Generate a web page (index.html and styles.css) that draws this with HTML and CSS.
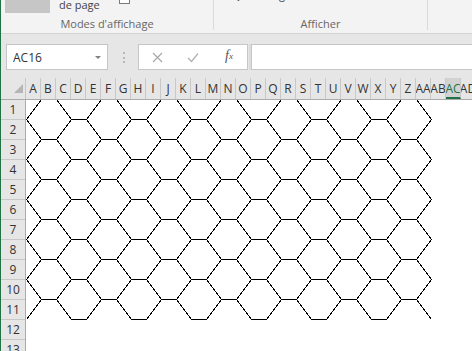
FILE: index.html
```html
<!DOCTYPE html>
<html lang="fr">
<head>
    <meta charset="UTF-8">
    <meta name="viewport" content="width=device-width, initial-scale=1.0">
    <title>Classeur - nid d'abeille</title>
    <link rel="stylesheet" href="styles.css">
</head>
<body>
    <div class="app">
        <div class="ribbon">
            <div class="group">
                <div class="group-body">
                    <div class="icon-box"></div>
                    <span class="btn-text">de page</span>
                    <span class="checkbox"></span>
                </div>
                <div class="group-label">Modes d'affichage</div>
            </div>
            <div class="group">
                <div class="group-body">
                    <span class="cut-text">Quadrillage</span>
                </div>
                <div class="group-label">Afficher</div>
            </div>
            <div class="group group-last"></div>
        </div>

        <div class="formula-bar">
            <div class="name-box">
                <span>AC16</span>
                <span class="arrow"></span>
            </div>
            <div class="grip"></div>
            <div class="fx-box">
                <span class="fx-btn">
                    <svg width="11" height="11" viewBox="0 0 11 11"><path d="M1 1L10 10M10 1L1 10" stroke="#a8a8a8" stroke-width="1.2" fill="none"/></svg>
                </span>
                <span class="fx-btn">
                    <svg width="12" height="11" viewBox="0 0 12 11"><path d="M1 6L4.5 9.5L11 1.5" stroke="#b0b0b0" stroke-width="1.2" fill="none"/></svg>
                </span>
                <span class="fx-btn fx-label">f<sub>x</sub></span>
            </div>
            <div class="formula-input"></div>
        </div>

        <div class="sheet">
            <div class="col-headers">
                <div class="corner"><span class="corner-tri"></span></div>
                <div class="col">A</div>
                <div class="col">B</div>
                <div class="col">C</div>
                <div class="col">D</div>
                <div class="col">E</div>
                <div class="col">F</div>
                <div class="col">G</div>
                <div class="col">H</div>
                <div class="col">I</div>
                <div class="col">J</div>
                <div class="col">K</div>
                <div class="col">L</div>
                <div class="col">M</div>
                <div class="col">N</div>
                <div class="col">O</div>
                <div class="col">P</div>
                <div class="col">Q</div>
                <div class="col">R</div>
                <div class="col">S</div>
                <div class="col">T</div>
                <div class="col">U</div>
                <div class="col">V</div>
                <div class="col">W</div>
                <div class="col">X</div>
                <div class="col">Y</div>
                <div class="col">Z</div>
                <div class="col">AA</div>
                <div class="col">AB</div>
                <div class="col col-active">AC</div>
                <div class="col">AD</div>
            </div>

            <div class="sheet-body">
                <div class="row-headers">
                    <div class="row-num">1</div>
                    <div class="row-num">2</div>
                    <div class="row-num">3</div>
                    <div class="row-num">4</div>
                    <div class="row-num">5</div>
                    <div class="row-num">6</div>
                    <div class="row-num">7</div>
                    <div class="row-num">8</div>
                    <div class="row-num">9</div>
                    <div class="row-num">10</div>
                    <div class="row-num">11</div>
                    <div class="row-num">12</div>
                    <div class="row-num">13</div>
                </div>
                <div class="cells">
                    <!-- hexagon drawing: one zigzag per row, 15px per column, 20px per row -->
                    <svg class="hexes" width="406" height="220" shape-rendering="crispEdges">
                        <defs>
                            <polyline id="zig-even" points="0,20 15,0 30,0 45,20 60,20 75,0 90,0 105,20 120,20 135,0 150,0 165,20 180,20 195,0 210,0 225,20 240,20 255,0 270,0 285,20 300,20 315,0 330,0 345,20 360,20 375,0 390,0 405,20"/>
                            <polyline id="zig-odd" points="0,0 15,20 30,20 45,0 60,0 75,20 90,20 105,0 120,0 135,20 150,20 165,0 180,0 195,20 210,20 225,0 240,0 255,20 270,20 285,0 300,0 315,20 330,20 345,0 360,0 375,20 390,20 405,0"/>
                        </defs>
                        <g transform="translate(0.5,-0.5)" stroke="#000" stroke-width="1" fill="none">
                            <use href="#zig-even" y="0"/>
                            <use href="#zig-odd" y="20"/>
                            <use href="#zig-even" y="40"/>
                            <use href="#zig-odd" y="60"/>
                            <use href="#zig-even" y="80"/>
                            <use href="#zig-odd" y="100"/>
                            <use href="#zig-even" y="120"/>
                            <use href="#zig-odd" y="140"/>
                            <use href="#zig-even" y="160"/>
                            <use href="#zig-odd" y="180"/>
                            <use href="#zig-even" y="200"/>
                        </g>
                    </svg>
                </div>
            </div>
        </div>
    </div>
</body>
</html>
```

FILE: styles.css
```css
html, body {
    margin: 0;
    padding: 0;
    width: 472px;
    height: 351px;
    overflow: hidden;
}
body {
    font-family: "Open Sans", "Noto Sans", sans-serif;
    background-color: #fff;
}
.app {
    display: flex;
    flex-direction: column;
    height: 351px;
    border-left: 1px solid #217346;
}

/* ribbon */
.ribbon {
    display: flex;
    height: 30px;
    padding-bottom: 3px;
    background-color: #f3f3f3;
    border-bottom: 1px solid #d5d5d5;
}
.group {
    width: 214px;
    flex-shrink: 0;
    box-sizing: border-box;
    border-right: 1px solid #dadada;
    display: flex;
    flex-direction: column;
}
.group:first-child {
    width: 213px;
}
.group-last {
    flex: 1;
    border-right: none;
}
.group-body {
    height: 18px;
    display: flex;
    align-items: flex-start;
}
.icon-box {
    width: 45px;
    height: 13px;
    margin-left: 4px;
    background-color: #c6c6c6;
}
.btn-text {
    margin-left: 9px;
    margin-top: -3px;
    font-size: 11px;
    line-height: 15px;
    color: #444;
}
.checkbox {
    width: 9px;
    height: 9px;
    margin-left: 19px;
    margin-top: -7px;
    border: 1px solid #7a7a7a;
    background-color: #fff;
}
.cut-text {
    margin-left: 18px;
    margin-top: -13px;
    font-size: 11px;
    line-height: 15px;
    color: #444;
}
.group-label {
    height: 12px;
    font-size: 11px;
    line-height: 12px;
    color: #666;
    text-align: center;
    white-space: nowrap;
}

/* formula bar */
.formula-bar {
    display: flex;
    align-items: center;
    height: 26px;
    padding: 10px 0 8px 5px;
    background-color: #e6e6e6;
}
.name-box {
    width: 102px;
    height: 26px;
    box-sizing: border-box;
    display: flex;
    align-items: center;
    padding-left: 6px;
    background-color: #fff;
    border: 1px solid #c6c6c6;
    font-size: 12px;
    color: #333;
}
.arrow {
    margin-left: auto;
    margin-right: 6px;
    width: 0;
    height: 0;
    border-left: 3px solid transparent;
    border-right: 3px solid transparent;
    border-top: 3px solid #808080;
}
.grip {
    width: 0;
    height: 11px;
    margin-left: 15px;
    border-left: 2px dotted #b8b8b8;
}
.fx-box {
    display: flex;
    width: 110px;
    height: 26px;
    box-sizing: border-box;
    margin-left: 13px;
    background-color: #fff;
    border: 1px solid #c6c6c6;
}
.fx-btn {
    width: 36px;
    display: flex;
    align-items: center;
    justify-content: center;
}
.fx-label {
    font-family: "Liberation Serif", "DejaVu Serif", serif;
    font-style: italic;
    font-size: 14px;
    color: #555;
    padding-bottom: 2px;
}
.fx-label sub {
    font-size: 9px;
    vertical-align: -2px;
}
.formula-input {
    flex: 1;
    height: 26px;
    box-sizing: border-box;
    margin-left: 3px;
    margin-right: -2px;
    background-color: #fff;
    border: 1px solid #c6c6c6;
    box-shadow: -2px 0 0 #dcdcdc;
}

/* sheet */
.sheet {
    flex: 1;
    display: flex;
    flex-direction: column;
    overflow: hidden;
}
.col-headers {
    display: flex;
    height: 22px;
    box-sizing: border-box;
    background-color: #e6e6e6;
    border-bottom: 1px solid #ababab;
}
.corner {
    width: 25px;
    flex-shrink: 0;
    box-sizing: border-box;
    display: flex;
    align-items: flex-end;
    justify-content: flex-end;
    padding: 0 2px 6px 0;
    border-right: 1px solid #c6c6c6;
}
.corner-tri {
    width: 0;
    height: 0;
    border-left: 9px solid transparent;
    border-bottom: 9px solid #b5b5b5;
}
.col {
    width: 15px;
    flex-shrink: 0;
    box-sizing: border-box;
    display: flex;
    align-items: center;
    justify-content: center;
    overflow: hidden;
    white-space: nowrap;
    border-right: 1px solid #c8c8c8;
    font-size: 12px;
    color: #333;
}
.col-active {
    background-color: #d2d2d2;
    color: #217346;
    border-bottom: 2px solid #217346;
    padding-top: 2px;
}
.sheet-body {
    flex: 1;
    display: flex;
}
.row-headers {
    width: 25px;
    flex-shrink: 0;
    box-sizing: border-box;
    background-color: #e6e6e6;
    border-right: 1px solid #ababab;
}
.row-num {
    height: 20px;
    box-sizing: border-box;
    display: flex;
    align-items: center;
    justify-content: center;
    border-bottom: 1px solid #c8c8c8;
    font-size: 12px;
    color: #333;
}
.cells {
    flex: 1;
    background-color: #fff;
}
.hexes {
    display: block;
}
```
